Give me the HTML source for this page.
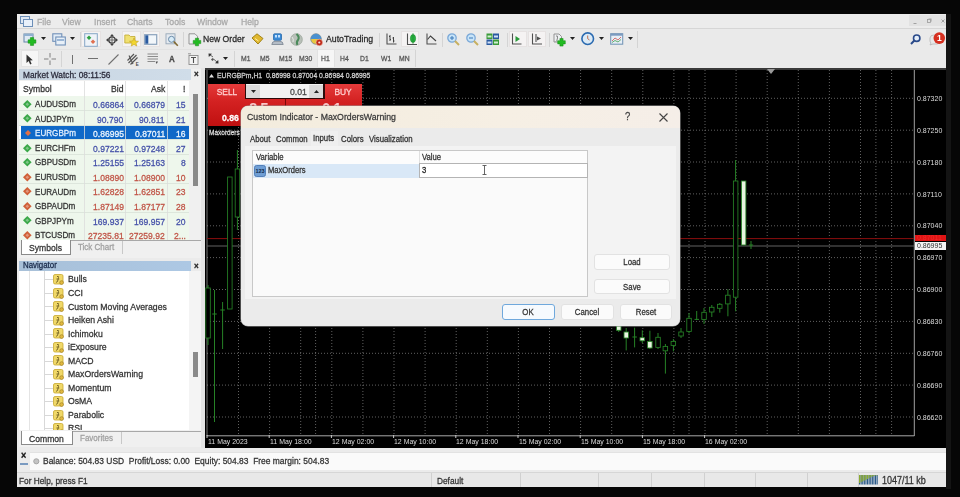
<!DOCTYPE html><html><head><meta charset="utf-8"><style>
html,body{margin:0;padding:0;}
body{width:960px;height:497px;overflow:hidden;background:#060606;position:relative;font-family:"Liberation Sans",sans-serif;}
div{box-sizing:border-box;}
#r div{-webkit-text-stroke:0.25px currentColor;}
#r{filter:blur(0.25px);}
.t{transform:scaleY(1.12);will-change:transform;}
svg{position:absolute;overflow:visible;}
</style></head><body><div id="r" style="position:absolute;left:0;top:0;width:960px;height:497px;overflow:hidden;"><div style="position:absolute;left:946px;top:14px;width:4.5px;height:475px;background:#141414;"></div><div style="position:absolute;left:17px;top:14px;width:929px;height:473px;background:#ebebeb;"></div><div style="position:absolute;left:17px;top:14px;width:929px;height:15px;background:#ececec;"></div><div class="t" style="position:absolute;left:37.2px;top:16.8px;font-size:8.7px;line-height:10.44px;color:#a8a8a8;white-space:nowrap;">File</div><div class="t" style="position:absolute;left:62.4px;top:16.8px;font-size:8.7px;line-height:10.44px;color:#a8a8a8;white-space:nowrap;">View</div><div class="t" style="position:absolute;left:93.5px;top:16.8px;font-size:8.7px;line-height:10.44px;color:#a8a8a8;white-space:nowrap;">Insert</div><div class="t" style="position:absolute;left:127.4px;top:16.8px;font-size:8.7px;line-height:10.44px;color:#a8a8a8;white-space:nowrap;">Charts</div><div class="t" style="position:absolute;left:164.8px;top:16.8px;font-size:8.7px;line-height:10.44px;color:#a8a8a8;white-space:nowrap;">Tools</div><div class="t" style="position:absolute;left:196.5px;top:16.8px;font-size:8.7px;line-height:10.44px;color:#a8a8a8;white-space:nowrap;">Window</div><div class="t" style="position:absolute;left:241.2px;top:16.8px;font-size:8.7px;line-height:10.44px;color:#a8a8a8;white-space:nowrap;">Help</div><svg style="left:20px;top:16px" width="13" height="12"><rect x="0.5" y="0.5" width="9" height="7" fill="#dfe9f5" stroke="#6d8fb8" stroke-width="1"/><rect x="3.5" y="3.5" width="9" height="7" fill="#e8f0fa" stroke="#6d8fb8" stroke-width="1"/></svg><div style="position:absolute;left:909px;top:14.7px;width:37px;height:11.1px;background:#e2e2e2;"></div><svg style="left:912px;top:18px" width="34" height="7"><path d="M1.5 5.5 H4.5" stroke="#9a9a9a" stroke-width="0.9"/><rect x="15.5" y="1.5" width="3" height="3" fill="none" stroke="#9a9a9a" stroke-width="0.8"/><path d="M16.5 0.8 H19.3 V3.6" fill="none" stroke="#9a9a9a" stroke-width="0.6"/><path d="M29.5 1.5 L32.5 4.5 M32.5 1.5 L29.5 4.5" stroke="#9a9a9a" stroke-width="0.9"/></svg><div style="position:absolute;left:17px;top:29px;width:929px;height:19px;background:#eaeaea;"></div><div style="position:absolute;left:17px;top:28.2px;width:929px;height:1px;background:#d6d6d6;"></div><div style="position:absolute;left:17px;top:48px;width:929px;height:20px;background:#eaeaea;"></div><div style="position:absolute;left:17px;top:48.5px;width:399px;height:1px;background:#e2e2e2;"></div><div style="position:absolute;left:81px;top:31px;width:20px;height:16px;background:#f5f3f3;border:1px solid #e6e2e2;"></div><div style="position:absolute;left:122px;top:31px;width:19px;height:16px;background:#f5f3f3;border:1px solid #e6e2e2;"></div><div style="position:absolute;left:142.5px;top:31px;width:17.5px;height:16px;background:#f5f3f3;border:1px solid #e6e2e2;"></div><div style="position:absolute;left:401.2px;top:31px;width:17.80000000000001px;height:16px;background:#f5f3f3;border:1px solid #e6e2e2;"></div><div style="position:absolute;left:508.5px;top:31px;width:18.0px;height:16px;background:#f5f3f3;border:1px solid #e6e2e2;"></div><div style="position:absolute;left:527.5px;top:31px;width:18.5px;height:16px;background:#f5f3f3;border:1px solid #e6e2e2;"></div><svg style="left:22.5px;top:32.5px" width="16" height="14" viewBox="0 0 16 14"><rect x="1" y="1" width="9" height="8" fill="#dfeaf5" stroke="#6f8fb0" stroke-width="1.1"/><rect x="1" y="1" width="9" height="2" fill="#8fb0d0"/><path d="M7.362 4.6 h3.276 v2.262 h2.262 v3.276 h-2.262 v2.262 h-3.276 v-2.262 h-2.262 v-3.276 h2.262 Z" fill="#22bb22" stroke="#118811" stroke-width="0.5"/></svg><svg style="left:41.0px;top:37.3px" width="5" height="3" viewBox="0 0 5 3"><path d="M0 0 L5 0 L2.5 3 Z" fill="#222"/></svg><svg style="left:52px;top:32.5px" width="14" height="13" viewBox="0 0 14 13"><rect x="0.8" y="0.8" width="9" height="7.5" fill="#e2ecf6" stroke="#7090b8" stroke-width="1.1"/><rect x="3.8" y="4" width="9.5" height="8" fill="#e8f0f8" stroke="#7090b8" stroke-width="1.1"/><rect x="5" y="6" width="7" height="2" fill="#9ab6d6"/></svg><svg style="left:70.3px;top:37.3px" width="5" height="3" viewBox="0 0 5 3"><path d="M0 0 L5 0 L2.5 3 Z" fill="#222"/></svg><div style="position:absolute;left:79.5px;top:32px;width:1px;height:15px;background:#d4d4d4;"></div><svg style="left:83.5px;top:32.5px" width="14" height="14" viewBox="0 0 14 14"><rect x="0.7" y="0.7" width="12.6" height="12.6" fill="#eef3f8" stroke="#86a6c6" stroke-width="1"/><path d="M5 2.5 L7.3 4.8 L5 7.1 L2.7 4.8Z" fill="#2fa040"/><path d="M9 6.5 L11.3 8.8 L9 11.1 L6.7 8.8Z" fill="#e07050"/></svg><svg style="left:105.5px;top:33.5px" width="12" height="12" viewBox="0 0 12 12"><circle cx="6" cy="6" r="3.2" fill="none" stroke="#404040" stroke-width="1.3"/><path d="M6 0 L8 2.3 L4 2.3Z M6 12 L8 9.7 L4 9.7Z M0 6 L2.3 4 L2.3 8Z M12 6 L9.7 4 L9.7 8Z" fill="#404040"/><path d="M6 2.3 V9.7 M2.3 6 H9.7" stroke="#505050" stroke-width="0.8"/></svg><svg style="left:123.5px;top:32.5px" width="15" height="13" viewBox="0 0 15 13"><path d="M0.8 2 L5 2 L6.5 3.5 L11 3.5 L11 10 L0.8 10Z" fill="#f0e070" stroke="#c0a830" stroke-width="0.8"/><path d="M10 5 L11.3 8 L14.5 8.3 L12 10.3 L12.8 13 L10 11.5 L7.2 13 L8 10.3 L5.5 8.3 L8.7 8Z" fill="#f2d630" stroke="#c0a020" stroke-width="0.6"/></svg><svg style="left:144px;top:34px" width="13.5" height="11" viewBox="0 0 13.5 11"><rect x="0.7" y="0.7" width="12" height="9.6" fill="#f2f6fa" stroke="#8aa2bc" stroke-width="1.2"/><rect x="1.3" y="1.3" width="3" height="8.4" fill="#2a5aa0"/></svg><svg style="left:164.5px;top:32.5px" width="14" height="14" viewBox="0 0 14 14"><rect x="1" y="0.8" width="9" height="10" fill="#e4eaf0" stroke="#98a8b8" stroke-width="0.9"/><circle cx="6.5" cy="6.3" r="3" fill="#d8ecf8" stroke="#6a8aa8" stroke-width="1"/><path d="M8.8 8.6 L12.8 12.8" stroke="#806830" stroke-width="1.6"/></svg><div style="position:absolute;left:183px;top:32px;width:1px;height:15px;background:#d4d4d4;"></div><svg style="left:187.5px;top:32.5px" width="14" height="14" viewBox="0 0 14 14"><path d="M1 0.8 H7 L9.5 3.3 V11 H1Z" fill="#eef0f2" stroke="#8a8a8a" stroke-width="0.9"/><path d="M7.404 5.2 h3.1919999999999997 v2.2039999999999997 h2.2039999999999997 v3.1919999999999997 h-2.2039999999999997 v2.2039999999999997 h-3.1919999999999997 v-2.2039999999999997 h-2.2039999999999997 v-3.1919999999999997 h2.2039999999999997 Z" fill="#22bb22" stroke="#118811" stroke-width="0.5"/></svg><div class="t" style="position:absolute;left:203.3px;top:34.0px;font-size:8.6px;line-height:10.32px;color:#2a2a2a;white-space:nowrap;">New Order</div><svg style="left:251px;top:33px" width="13" height="12" viewBox="0 0 13 12"><path d="M1 5 L6 0.8 L12 5.5 L7 11 Z" fill="#e0b830" stroke="#9a7a10" stroke-width="0.9"/><path d="M4 5.5 L7.5 8" stroke="#fff0a0" stroke-width="1"/></svg><svg style="left:271px;top:32.5px" width="13" height="13" viewBox="0 0 13 13"><rect x="2.5" y="0.8" width="8" height="6.5" rx="1" fill="#3a8ad6" stroke="#2a6aaa" stroke-width="0.8"/><rect x="4" y="2" width="2" height="2.5" fill="#bfe0ff"/><rect x="7" y="2" width="2" height="2.5" fill="#bfe0ff"/><path d="M0.8 11.5 Q1 8.3 4 8.3 H9 Q12 8.3 12.2 11.5Z" fill="#b4bcc6" stroke="#7a8490" stroke-width="0.8"/></svg><svg style="left:290.3px;top:32.7px" width="13" height="13" viewBox="0 0 13 13"><circle cx="6.5" cy="6.5" r="5.8" fill="#b8c0b8" stroke="#9aa49a" stroke-width="0.8"/><path d="M6.5 1 Q10 4 8 7 Q6 9 7.5 12" fill="none" stroke="#4a8a5a" stroke-width="2"/><path d="M2 4 Q4 6 3 9" stroke="#e8ece8" stroke-width="1" fill="none"/></svg><svg style="left:310px;top:32.5px" width="13.5" height="13.5" viewBox="0 0 13.5 13.5"><circle cx="6" cy="6" r="5.3" fill="#e8c840" stroke="#7a8a9a" stroke-width="0.8"/><path d="M0.7 6 A5.3 5.3 0 0 1 11.3 6 Z" fill="#4a90d0"/><circle cx="9.3" cy="9.5" r="3.3" fill="#c02818" stroke="#f0d0c0" stroke-width="0.5"/><circle cx="9.3" cy="9.5" r="1.1" fill="#f4e0d8"/></svg><div class="t" style="position:absolute;left:326.3px;top:34.0px;font-size:8.72px;line-height:10.46px;color:#2a2a2a;white-space:nowrap;">AutoTrading</div><div style="position:absolute;left:379.2px;top:32.5px;width:1px;height:14.5px;background:#d4d4d4;"></div><svg style="left:386px;top:33px" width="11" height="12" viewBox="0 0 11 12"><path d="M1 0.5 V11 H10.5" fill="none" stroke="#505050" stroke-width="1.1"/><path d="M4 2 V8 M3 3.5 H4 M4 6.5 H5 M7.5 4 V9.5 M6.5 5 H7.5 M7.5 8 H8.5" stroke="#404040" stroke-width="1"/></svg><svg style="left:405.5px;top:32.5px" width="12" height="13" viewBox="0 0 12 13"><path d="M1.5 0.5 V11.5 H11" fill="none" stroke="#505050" stroke-width="1.1"/><ellipse cx="7" cy="5.5" rx="2.6" ry="4" fill="#28b040" stroke="#188a2a" stroke-width="0.6"/><path d="M7 0 V11" stroke="#188a2a" stroke-width="0.6"/></svg><svg style="left:426px;top:33px" width="11" height="12" viewBox="0 0 11 12"><path d="M1 0.5 V11 H10.5" fill="none" stroke="#505050" stroke-width="1.1"/><path d="M1.5 6.5 L4.5 3 L10 8" fill="none" stroke="#404040" stroke-width="1.1"/></svg><div style="position:absolute;left:442px;top:32.5px;width:1px;height:14.5px;background:#d4d4d4;"></div><svg style="left:447.2px;top:32.5px" width="13" height="13" viewBox="0 0 13 13"><circle cx="5" cy="5" r="4.2" fill="#c8e4f8" stroke="#7aa8d8" stroke-width="1.3"/><path d="M3 5 H7 M5 3 V7" stroke="#3a78b8" stroke-width="1"/><path d="M8 8 L12 12" stroke="#c8b060" stroke-width="2"/></svg><svg style="left:466px;top:32.5px" width="13" height="13" viewBox="0 0 13 13"><circle cx="5" cy="5" r="4.2" fill="#c8e4f8" stroke="#7aa8d8" stroke-width="1.3"/><path d="M3 5 H7" stroke="#3a78b8" stroke-width="1"/><path d="M8 8 L12 12" stroke="#c8b060" stroke-width="2"/></svg><svg style="left:486px;top:33px" width="13.5" height="12.5" viewBox="0 0 13.5 12.5"><rect x="0.5" y="0.5" width="6" height="5.5" fill="#3a9a3a"/><rect x="7" y="0.5" width="6" height="5.5" fill="#2a5aa0"/><rect x="0.5" y="6.5" width="6" height="5.5" fill="#2a5aa0"/><rect x="7" y="6.5" width="6" height="5.5" fill="#3a9a3a"/><rect x="1.5" y="2.5" width="4" height="2" fill="#d0f0d0"/><rect x="8" y="2.5" width="4" height="2" fill="#d0e0f8"/><rect x="1.5" y="8.5" width="4" height="2" fill="#d0e0f8"/><rect x="8" y="8.5" width="4" height="2" fill="#d0f0d0"/></svg><div style="position:absolute;left:506.7px;top:32.5px;width:1px;height:14.5px;background:#d4d4d4;"></div><svg style="left:511px;top:33px" width="11" height="12" viewBox="0 0 11 12"><path d="M1.5 0.5 V11 H10.5" fill="none" stroke="#505050" stroke-width="1.1"/><path d="M4.5 3 L9 6 L4.5 9Z" fill="#2a9a3a"/></svg><svg style="left:530.5px;top:33px" width="12" height="12" viewBox="0 0 12 12"><path d="M1.5 0.5 V11 H11" fill="none" stroke="#505050" stroke-width="1.1"/><path d="M5 1 V9" stroke="#505050" stroke-width="1.1"/><path d="M6 3.5 L10 5.5 L6 7.5Z" fill="#505050"/></svg><div style="position:absolute;left:549.4px;top:32.5px;width:1px;height:14.5px;background:#d4d4d4;"></div><svg style="left:553px;top:32.5px" width="13.5" height="14" viewBox="0 0 13.5 14"><path d="M1 1 H6 L8.5 3.5 V9 H1Z" fill="#eef0f2" stroke="#8a8a8a" stroke-width="0.9"/><path d="M3 3 Q5 2 4.5 5 Q4 8 3 8.5" fill="none" stroke="#6a6a6a" stroke-width="0.8"/><path d="M6.904 5.500000000000001 h3.1919999999999997 v2.2039999999999997 h2.2039999999999997 v3.1919999999999997 h-2.2039999999999997 v2.2039999999999997 h-3.1919999999999997 v-2.2039999999999997 h-2.2039999999999997 v-3.1919999999999997 h2.2039999999999997 Z" fill="#22bb22" stroke="#118811" stroke-width="0.5"/></svg><svg style="left:569.5px;top:37.3px" width="5" height="3" viewBox="0 0 5 3"><path d="M0 0 L5 0 L2.5 3 Z" fill="#222"/></svg><svg style="left:581px;top:32.3px" width="13.5" height="13.5" viewBox="0 0 13.5 13.5"><circle cx="6.7" cy="6.7" r="5.8" fill="#dbeaf6" stroke="#2a6ab0" stroke-width="1.6"/><path d="M6.7 6.7 L6.7 3.5 M6.7 6.7 L8.5 8" stroke="#c07050" stroke-width="1"/></svg><svg style="left:598.8px;top:37.3px" width="5" height="3" viewBox="0 0 5 3"><path d="M0 0 L5 0 L2.5 3 Z" fill="#222"/></svg><svg style="left:610px;top:33px" width="13.5" height="12" viewBox="0 0 13.5 12"><rect x="0.7" y="0.7" width="12" height="10.5" fill="#e6eef6" stroke="#7898b8" stroke-width="1.1"/><rect x="0.7" y="0.7" width="12" height="2" fill="#7a9ac0"/><path d="M2 8 L5 5 L8 7 L11 4" fill="none" stroke="#d05050" stroke-width="0.8"/><path d="M2 9.5 L5 7.5 L8 9 L11 6.5" fill="none" stroke="#40a050" stroke-width="0.8"/></svg><svg style="left:627.9px;top:37.3px" width="5" height="3" viewBox="0 0 5 3"><path d="M0 0 L5 0 L2.5 3 Z" fill="#222"/></svg><div style="position:absolute;left:636.7px;top:31px;width:1px;height:16.5px;background:#d4d4d4;"></div><svg style="left:910px;top:33.5px" width="11" height="11" viewBox="0 0 11 11"><circle cx="6.7" cy="4.2" r="3.2" fill="#e4eefa" stroke="#2a4a8a" stroke-width="1.6"/><path d="M4.6 6.3 L1 10" stroke="#2a4a8a" stroke-width="2"/></svg><svg style="left:928px;top:31.5px" width="18" height="14" viewBox="0 0 18 14"><path d="M2 6 Q2 3 6 3 H9 Q12 3 12 6 V9 Q12 12 9 12 H5 L2 13 L3 11 Q2 10 2 9Z" fill="#e8e8e8" stroke="#b0b0b0" stroke-width="0.7"/><circle cx="11.3" cy="6.1" r="5.8" fill="#d63020"/><text x="11.3" y="9.0" font-size="8.5" font-weight="bold" text-anchor="middle" fill="#fff" font-family="Liberation Sans">1</text></svg><div style="position:absolute;left:21.2px;top:50.3px;width:18.3px;height:16.4px;background:#f6f6f6;border:1px solid #e4e4e4;"></div><svg style="left:26px;top:53.5px" width="7" height="11" viewBox="0 0 7 11"><path d="M0.5 0.5 L0.5 9 L2.6 7 L4.2 10.5 L5.6 9.8 L4.1 6.5 L6.8 6.3Z" fill="#303030"/></svg><svg style="left:44px;top:53px" width="12" height="12" viewBox="0 0 12 12"><path d="M6 0 V4.5 M6 7.5 V12 M0 6 H4.5 M7.5 6 H12" stroke="#808080" stroke-width="1"/></svg><div style="position:absolute;left:61px;top:50.5px;width:1px;height:16.0px;background:#d4d4d4;"></div><div style="position:absolute;left:72.3px;top:54.5px;width:1.2px;height:9.4px;background:#707070;"></div><div style="position:absolute;left:88.2px;top:58.1px;width:9.4px;height:1.2px;background:#707070;"></div><svg style="left:107.7px;top:53.5px" width="11" height="11" viewBox="0 0 11 11"><path d="M0.5 10.5 L10.5 0.5" stroke="#707070" stroke-width="1.1"/></svg><svg style="left:126.5px;top:52.5px" width="12" height="13" viewBox="0 0 12 13"><path d="M0.5 7.5 L7 1 M1.5 10 L9.5 2 M3.5 11.5 L10.5 4.5" stroke="#555" stroke-width="1.2"/><path d="M2 2.5 L6 11" stroke="#555" stroke-width="1.1"/><text x="8.8" y="12.8" font-size="4.5" font-weight="bold" fill="#444" font-family="Liberation Sans">E</text></svg><svg style="left:147.3px;top:53px" width="12" height="12" viewBox="0 0 12 12"><path d="M0.5 1 H11 M0.5 3.5 H11 M0.5 6 H11 M0.5 8.5 H8" stroke="#808080" stroke-width="0.9"/><path d="M8.5 8.5 L11 8.5 L9.7 11Z" fill="#505050"/></svg><div class="t" style="position:absolute;left:169.4px;top:54.9px;font-size:8px;line-height:9.60px;color:#4a4a4a;white-space:nowrap;font-weight:bold;">A</div><svg style="left:188px;top:52.5px" width="11" height="12" viewBox="0 0 11 12"><rect x="1" y="2.5" width="9" height="9" fill="#f4f4f4" stroke="#8a8a8a" stroke-width="0.9"/><path d="M3 4.5 H8 M5.5 4.5 V10" stroke="#505050" stroke-width="1.1"/><path d="M0 0.8 H3" stroke="#808080" stroke-width="0.8"/></svg><svg style="left:207.5px;top:53px" width="11" height="11" viewBox="0 0 11 11"><path d="M1.5 1.5 L5 4" stroke="#666" stroke-width="1"/><path d="M0.5 0.5 L4 0.8 L0.8 4Z" fill="#333"/><path d="M5.5 6 L9 9" stroke="#666" stroke-width="1"/><path d="M10.5 10.5 L7 10.2 L10.2 7Z" fill="#333"/><path d="M3 6.5 L4.5 5 L6 6.5 L4.5 8Z" fill="#555"/></svg><svg style="left:223.2px;top:57.3px" width="5" height="3" viewBox="0 0 5 3"><path d="M0 0 L5 0 L2.5 3 Z" fill="#222"/></svg><div style="position:absolute;left:234.4px;top:50.5px;width:1px;height:16.0px;background:#d4d4d4;"></div><div style="position:absolute;left:316.9px;top:50px;width:18.3px;height:17px;background:#f6f6f6;border-left:1px solid #e2e2e2;border-right:1px solid #e2e2e2;"></div><div class="t" style="position:absolute;left:240.8px;top:54.5px;font-size:6.8px;line-height:8.16px;color:#555;white-space:nowrap;">M1</div><div class="t" style="position:absolute;left:260px;top:54.5px;font-size:6.8px;line-height:8.16px;color:#555;white-space:nowrap;">M5</div><div class="t" style="position:absolute;left:279px;top:54.5px;font-size:6.8px;line-height:8.16px;color:#555;white-space:nowrap;">M15</div><div class="t" style="position:absolute;left:298.5px;top:54.5px;font-size:6.8px;line-height:8.16px;color:#555;white-space:nowrap;">M30</div><div class="t" style="position:absolute;left:321px;top:54.5px;font-size:6.8px;line-height:8.16px;color:#555;white-space:nowrap;">H1</div><div class="t" style="position:absolute;left:340.2px;top:54.5px;font-size:6.8px;line-height:8.16px;color:#555;white-space:nowrap;">H4</div><div class="t" style="position:absolute;left:360.4px;top:54.5px;font-size:6.8px;line-height:8.16px;color:#555;white-space:nowrap;">D1</div><div class="t" style="position:absolute;left:380.6px;top:54.5px;font-size:6.8px;line-height:8.16px;color:#555;white-space:nowrap;">W1</div><div class="t" style="position:absolute;left:399px;top:54.5px;font-size:6.8px;line-height:8.16px;color:#555;white-space:nowrap;">MN</div><div style="position:absolute;left:415.4px;top:50px;width:1px;height:17px;background:#d4d4d4;"></div><div style="position:absolute;left:201px;top:68px;width:4px;height:380px;background:#e4e4e4;"></div><div style="position:absolute;left:205px;top:68px;width:741px;height:380px;background:#000;"></div><div style="position:absolute;left:205px;top:68px;width:741px;height:2px;background:#3a3a3a;"></div><svg style="left:0;top:0" width="960" height="497"><line x1="238.5" y1="70" x2="238.5" y2="436" stroke="#8a8a8a" stroke-width="1" stroke-dasharray="1 2" opacity="0.7"/><line x1="269.6" y1="70" x2="269.6" y2="436" stroke="#8a8a8a" stroke-width="1" stroke-dasharray="1 2" opacity="0.7"/><line x1="300.7" y1="70" x2="300.7" y2="436" stroke="#8a8a8a" stroke-width="1" stroke-dasharray="1 2" opacity="0.7"/><line x1="331.8" y1="70" x2="331.8" y2="436" stroke="#8a8a8a" stroke-width="1" stroke-dasharray="1 2" opacity="0.7"/><line x1="362.9" y1="70" x2="362.9" y2="436" stroke="#8a8a8a" stroke-width="1" stroke-dasharray="1 2" opacity="0.7"/><line x1="394.0" y1="70" x2="394.0" y2="436" stroke="#8a8a8a" stroke-width="1" stroke-dasharray="1 2" opacity="0.7"/><line x1="425.1" y1="70" x2="425.1" y2="436" stroke="#8a8a8a" stroke-width="1" stroke-dasharray="1 2" opacity="0.7"/><line x1="456.2" y1="70" x2="456.2" y2="436" stroke="#8a8a8a" stroke-width="1" stroke-dasharray="1 2" opacity="0.7"/><line x1="487.3" y1="70" x2="487.3" y2="436" stroke="#8a8a8a" stroke-width="1" stroke-dasharray="1 2" opacity="0.7"/><line x1="518.4" y1="70" x2="518.4" y2="436" stroke="#8a8a8a" stroke-width="1" stroke-dasharray="1 2" opacity="0.7"/><line x1="549.5" y1="70" x2="549.5" y2="436" stroke="#8a8a8a" stroke-width="1" stroke-dasharray="1 2" opacity="0.7"/><line x1="580.6" y1="70" x2="580.6" y2="436" stroke="#8a8a8a" stroke-width="1" stroke-dasharray="1 2" opacity="0.7"/><line x1="611.7" y1="70" x2="611.7" y2="436" stroke="#8a8a8a" stroke-width="1" stroke-dasharray="1 2" opacity="0.7"/><line x1="642.8" y1="70" x2="642.8" y2="436" stroke="#8a8a8a" stroke-width="1" stroke-dasharray="1 2" opacity="0.7"/><line x1="673.9" y1="70" x2="673.9" y2="436" stroke="#8a8a8a" stroke-width="1" stroke-dasharray="1 2" opacity="0.7"/><line x1="705.0" y1="70" x2="705.0" y2="436" stroke="#8a8a8a" stroke-width="1" stroke-dasharray="1 2" opacity="0.7"/><line x1="736.1" y1="70" x2="736.1" y2="436" stroke="#8a8a8a" stroke-width="1" stroke-dasharray="1 2" opacity="0.7"/><line x1="767.2" y1="70" x2="767.2" y2="436" stroke="#8a8a8a" stroke-width="1" stroke-dasharray="1 2" opacity="0.7"/><line x1="798.3" y1="70" x2="798.3" y2="436" stroke="#8a8a8a" stroke-width="1" stroke-dasharray="1 2" opacity="0.7"/><line x1="829.4" y1="70" x2="829.4" y2="436" stroke="#8a8a8a" stroke-width="1" stroke-dasharray="1 2" opacity="0.7"/><line x1="860.5" y1="70" x2="860.5" y2="436" stroke="#8a8a8a" stroke-width="1" stroke-dasharray="1 2" opacity="0.7"/><line x1="891.6" y1="70" x2="891.6" y2="436" stroke="#8a8a8a" stroke-width="1" stroke-dasharray="1 2" opacity="0.7"/><line x1="315.6" y1="70" x2="315.6" y2="436" stroke="#8a8a8a" stroke-width="1" stroke-dasharray="1 2" opacity="0.7"/><line x1="689.0" y1="70" x2="689.0" y2="436" stroke="#8a8a8a" stroke-width="1" stroke-dasharray="1 2" opacity="0.7"/><line x1="875.9" y1="70" x2="875.9" y2="436" stroke="#8a8a8a" stroke-width="1" stroke-dasharray="1 2" opacity="0.7"/><line x1="207" y1="98.3" x2="914" y2="98.3" stroke="#8a8a8a" stroke-width="1" stroke-dasharray="1 2" opacity="0.7"/><line x1="207" y1="130.2" x2="914" y2="130.2" stroke="#8a8a8a" stroke-width="1" stroke-dasharray="1 2" opacity="0.7"/><line x1="207" y1="162.0" x2="914" y2="162.0" stroke="#8a8a8a" stroke-width="1" stroke-dasharray="1 2" opacity="0.7"/><line x1="207" y1="193.9" x2="914" y2="193.9" stroke="#8a8a8a" stroke-width="1" stroke-dasharray="1 2" opacity="0.7"/><line x1="207" y1="225.8" x2="914" y2="225.8" stroke="#8a8a8a" stroke-width="1" stroke-dasharray="1 2" opacity="0.7"/><line x1="207" y1="257.6" x2="914" y2="257.6" stroke="#8a8a8a" stroke-width="1" stroke-dasharray="1 2" opacity="0.7"/><line x1="207" y1="289.5" x2="914" y2="289.5" stroke="#8a8a8a" stroke-width="1" stroke-dasharray="1 2" opacity="0.7"/><line x1="207" y1="321.4" x2="914" y2="321.4" stroke="#8a8a8a" stroke-width="1" stroke-dasharray="1 2" opacity="0.7"/><line x1="207" y1="353.3" x2="914" y2="353.3" stroke="#8a8a8a" stroke-width="1" stroke-dasharray="1 2" opacity="0.7"/><line x1="207" y1="385.1" x2="914" y2="385.1" stroke="#8a8a8a" stroke-width="1" stroke-dasharray="1 2" opacity="0.7"/><line x1="207" y1="417.0" x2="914" y2="417.0" stroke="#8a8a8a" stroke-width="1" stroke-dasharray="1 2" opacity="0.7"/><line x1="914.3" y1="70" x2="914.3" y2="436" stroke="#b4b4b4" stroke-width="0.9"/><line x1="207" y1="435.8" x2="914.3" y2="435.8" stroke="#a8a8a8" stroke-width="1"/><line x1="207" y1="70" x2="207" y2="436" stroke="#c8c8c8" stroke-width="0.6"/><line x1="207" y1="238.6" x2="914" y2="238.6" stroke="#8a0e0e" stroke-width="1"/><line x1="207" y1="246" x2="914" y2="246" stroke="#626262" stroke-width="1"/><line x1="207.0" y1="435" x2="207.0" y2="438" stroke="#c8c8c8" stroke-width="1"/><line x1="269.2" y1="435" x2="269.2" y2="438" stroke="#c8c8c8" stroke-width="1"/><line x1="331.4" y1="435" x2="331.4" y2="438" stroke="#c8c8c8" stroke-width="1"/><line x1="393.6" y1="435" x2="393.6" y2="438" stroke="#c8c8c8" stroke-width="1"/><line x1="455.8" y1="435" x2="455.8" y2="438" stroke="#c8c8c8" stroke-width="1"/><line x1="518.0" y1="435" x2="518.0" y2="438" stroke="#c8c8c8" stroke-width="1"/><line x1="580.2" y1="435" x2="580.2" y2="438" stroke="#c8c8c8" stroke-width="1"/><line x1="642.4" y1="435" x2="642.4" y2="438" stroke="#c8c8c8" stroke-width="1"/><line x1="704.6" y1="435" x2="704.6" y2="438" stroke="#c8c8c8" stroke-width="1"/><line x1="208.0" y1="285.0" x2="208.0" y2="345.0" stroke="#268226" stroke-width="1"/><rect x="205.8" y="288.0" width="4.5" height="50.0" fill="#000" stroke="#268226" stroke-width="0.85"/><line x1="214.5" y1="290.0" x2="214.5" y2="422.0" stroke="#268226" stroke-width="1"/><line x1="212.2" y1="314.0" x2="216.8" y2="314.0" stroke="#268226" stroke-width="1"/><line x1="222.6" y1="302.0" x2="222.6" y2="349.0" stroke="#268226" stroke-width="1"/><line x1="220.3" y1="310.0" x2="224.8" y2="310.0" stroke="#268226" stroke-width="1"/><line x1="229.8" y1="177.0" x2="229.8" y2="309.0" stroke="#268226" stroke-width="1"/><rect x="227.6" y="177.0" width="4.5" height="132.0" fill="#000" stroke="#268226" stroke-width="0.85"/><line x1="237.4" y1="150.0" x2="237.4" y2="230.0" stroke="#268226" stroke-width="1"/><rect x="235.2" y="169.0" width="4.5" height="48.0" fill="#000" stroke="#268226" stroke-width="0.85"/><line x1="618.7" y1="322.0" x2="618.7" y2="332.0" stroke="#268226" stroke-width="1"/><rect x="616.5" y="326.0" width="4.5" height="4.3" fill="#e8f5e0" stroke="#268226" stroke-width="0.85"/><line x1="626.2" y1="328.0" x2="626.2" y2="350.4" stroke="#268226" stroke-width="1"/><rect x="624.0" y="332.0" width="4.5" height="6.0" fill="#e8f5e0" stroke="#268226" stroke-width="0.85"/><line x1="634.6" y1="327.7" x2="634.6" y2="347.4" stroke="#268226" stroke-width="1"/><line x1="632.4" y1="337.0" x2="636.9" y2="337.0" stroke="#268226" stroke-width="1"/><line x1="642.3" y1="330.3" x2="642.3" y2="343.0" stroke="#268226" stroke-width="1"/><rect x="640.0" y="337.7" width="4.5" height="3.1" fill="#e8f5e0" stroke="#268226" stroke-width="0.85"/><line x1="649.9" y1="330.7" x2="649.9" y2="349.0" stroke="#268226" stroke-width="1"/><rect x="647.6" y="341.4" width="4.5" height="6.6" fill="#e8f5e0" stroke="#268226" stroke-width="0.85"/><line x1="658.0" y1="333.0" x2="658.0" y2="349.0" stroke="#268226" stroke-width="1"/><rect x="655.8" y="337.3" width="4.5" height="10.1" fill="#000" stroke="#268226" stroke-width="0.85"/><line x1="665.4" y1="344.0" x2="665.4" y2="373.6" stroke="#268226" stroke-width="1"/><rect x="663.1" y="346.4" width="4.5" height="4.4" fill="#000" stroke="#268226" stroke-width="0.85"/><line x1="673.4" y1="339.0" x2="673.4" y2="351.4" stroke="#268226" stroke-width="1"/><rect x="671.1" y="341.4" width="4.5" height="4.0" fill="#000" stroke="#268226" stroke-width="0.85"/><line x1="681.0" y1="328.0" x2="681.0" y2="338.0" stroke="#268226" stroke-width="1"/><rect x="678.8" y="332.0" width="4.5" height="4.0" fill="#000" stroke="#268226" stroke-width="0.85"/><line x1="689.0" y1="313.0" x2="689.0" y2="333.4" stroke="#268226" stroke-width="1"/><rect x="686.8" y="318.3" width="4.5" height="13.1" fill="#000" stroke="#268226" stroke-width="0.85"/><line x1="696.7" y1="311.0" x2="696.7" y2="320.0" stroke="#268226" stroke-width="1"/><line x1="694.5" y1="319.4" x2="699.0" y2="319.4" stroke="#268226" stroke-width="1"/><line x1="704.0" y1="308.0" x2="704.0" y2="324.0" stroke="#268226" stroke-width="1"/><rect x="701.8" y="312.3" width="4.5" height="7.1" fill="#000" stroke="#268226" stroke-width="0.85"/><line x1="711.8" y1="305.0" x2="711.8" y2="317.0" stroke="#268226" stroke-width="1"/><rect x="709.5" y="307.3" width="4.5" height="4.7" fill="#000" stroke="#268226" stroke-width="0.85"/><line x1="719.8" y1="303.0" x2="719.8" y2="312.7" stroke="#268226" stroke-width="1"/><rect x="717.5" y="304.3" width="4.5" height="4.0" fill="#000" stroke="#268226" stroke-width="0.85"/><line x1="727.9" y1="289.2" x2="727.9" y2="316.3" stroke="#268226" stroke-width="1"/><rect x="725.6" y="295.2" width="4.5" height="8.7" fill="#000" stroke="#268226" stroke-width="0.85"/><line x1="735.6" y1="160.0" x2="735.6" y2="311.3" stroke="#268226" stroke-width="1"/><rect x="733.4" y="181.0" width="4.5" height="116.2" fill="#000" stroke="#268226" stroke-width="0.85"/><line x1="743.6" y1="181.0" x2="743.6" y2="245.0" stroke="#268226" stroke-width="1"/><rect x="741.4" y="181.0" width="4.5" height="64.0" fill="#e8f5e0" stroke="#268226" stroke-width="0.85"/><line x1="751.0" y1="241.0" x2="751.0" y2="249.0" stroke="#268226" stroke-width="1"/><line x1="748.8" y1="245.0" x2="753.2" y2="245.0" stroke="#268226" stroke-width="1"/></svg><div class="t" style="position:absolute;left:917.4px;top:94.89999999999999px;font-size:7.0px;line-height:8.40px;color:#dcdcdc;white-space:nowrap;-webkit-text-stroke:0;">0.87320</div><div class="t" style="position:absolute;left:917.4px;top:126.76999999999998px;font-size:7.0px;line-height:8.40px;color:#dcdcdc;white-space:nowrap;-webkit-text-stroke:0;">0.87250</div><div class="t" style="position:absolute;left:917.4px;top:158.64px;font-size:7.0px;line-height:8.40px;color:#dcdcdc;white-space:nowrap;-webkit-text-stroke:0;">0.87180</div><div class="t" style="position:absolute;left:917.4px;top:190.51px;font-size:7.0px;line-height:8.40px;color:#dcdcdc;white-space:nowrap;-webkit-text-stroke:0;">0.87110</div><div class="t" style="position:absolute;left:917.4px;top:222.38px;font-size:7.0px;line-height:8.40px;color:#dcdcdc;white-space:nowrap;-webkit-text-stroke:0;">0.87040</div><div class="t" style="position:absolute;left:917.4px;top:254.24999999999997px;font-size:7.0px;line-height:8.40px;color:#dcdcdc;white-space:nowrap;-webkit-text-stroke:0;">0.86970</div><div class="t" style="position:absolute;left:917.4px;top:286.12px;font-size:7.0px;line-height:8.40px;color:#dcdcdc;white-space:nowrap;-webkit-text-stroke:0;">0.86900</div><div class="t" style="position:absolute;left:917.4px;top:317.99px;font-size:7.0px;line-height:8.40px;color:#dcdcdc;white-space:nowrap;-webkit-text-stroke:0;">0.86830</div><div class="t" style="position:absolute;left:917.4px;top:349.86px;font-size:7.0px;line-height:8.40px;color:#dcdcdc;white-space:nowrap;-webkit-text-stroke:0;">0.86760</div><div class="t" style="position:absolute;left:917.4px;top:381.73px;font-size:7.0px;line-height:8.40px;color:#dcdcdc;white-space:nowrap;-webkit-text-stroke:0;">0.86690</div><div class="t" style="position:absolute;left:917.4px;top:413.6px;font-size:7.0px;line-height:8.40px;color:#dcdcdc;white-space:nowrap;-webkit-text-stroke:0;">0.86620</div><div style="position:absolute;left:915px;top:234.6px;width:30.5px;height:6.8px;background:#e01414;"></div><div class="t" style="position:absolute;left:917.4px;top:234.4px;font-size:7.0px;line-height:8.40px;color:#f02a2a;white-space:nowrap;-webkit-text-stroke:0;">0.87011</div><div style="position:absolute;left:915px;top:241.5px;width:30.5px;height:8.7px;background:#f4f4f4;"></div><div class="t" style="position:absolute;left:917.4px;top:242.2px;font-size:7.0px;line-height:8.40px;color:#333;white-space:nowrap;-webkit-text-stroke:0;">0.86995</div><div class="t" style="position:absolute;left:207.5px;top:438.3px;font-size:6.96px;line-height:8.35px;color:#dcdcdc;white-space:nowrap;-webkit-text-stroke:0;">11 May 2023</div><div class="t" style="position:absolute;left:269.7px;top:438.3px;font-size:6.96px;line-height:8.35px;color:#dcdcdc;white-space:nowrap;-webkit-text-stroke:0;">11 May 18:00</div><div class="t" style="position:absolute;left:331.9px;top:438.3px;font-size:6.96px;line-height:8.35px;color:#dcdcdc;white-space:nowrap;-webkit-text-stroke:0;">12 May 02:00</div><div class="t" style="position:absolute;left:394.1px;top:438.3px;font-size:6.96px;line-height:8.35px;color:#dcdcdc;white-space:nowrap;-webkit-text-stroke:0;">12 May 10:00</div><div class="t" style="position:absolute;left:456.3px;top:438.3px;font-size:6.96px;line-height:8.35px;color:#dcdcdc;white-space:nowrap;-webkit-text-stroke:0;">12 May 18:00</div><div class="t" style="position:absolute;left:518.5px;top:438.3px;font-size:6.96px;line-height:8.35px;color:#dcdcdc;white-space:nowrap;-webkit-text-stroke:0;">15 May 02:00</div><div class="t" style="position:absolute;left:580.7px;top:438.3px;font-size:6.96px;line-height:8.35px;color:#dcdcdc;white-space:nowrap;-webkit-text-stroke:0;">15 May 10:00</div><div class="t" style="position:absolute;left:642.9000000000001px;top:438.3px;font-size:6.96px;line-height:8.35px;color:#dcdcdc;white-space:nowrap;-webkit-text-stroke:0;">15 May 18:00</div><div class="t" style="position:absolute;left:705.1px;top:438.3px;font-size:6.96px;line-height:8.35px;color:#dcdcdc;white-space:nowrap;-webkit-text-stroke:0;">16 May 02:00</div><svg style="left:208.8px;top:73.5px" width="5" height="3.5"><path d="M0 3.5 L2.5 0 L5 3.5 Z" fill="#ddd"/></svg><div class="t" style="position:absolute;left:217px;top:72.3px;font-size:6.83px;line-height:8.20px;color:#cfcfcf;white-space:nowrap;">EURGBPm,H1&nbsp; 0.86998 0.87004 0.86984 0.86995</div><svg style="left:767px;top:69px" width="8" height="5"><path d="M0 0 L8 0 L4 5 Z" fill="#9a9a9a"/></svg><div style="position:absolute;left:208px;top:83.8px;width:153.7px;height:42.5px;background:linear-gradient(#e43a3a,#d42222 40%,#c01010);"></div><div style="position:absolute;left:285px;top:98.5px;width:1.2px;height:10px;background:#7a0808;"></div><div style="position:absolute;left:244.8px;top:83.8px;width:80px;height:15px;background:#2a0a0a;"></div><div class="t" style="position:absolute;left:126.5px;width:200px;top:87.2px;font-size:8.4px;line-height:10.08px;color:#ffd0d0;white-space:nowrap;text-align:center;">SELL</div><div class="t" style="position:absolute;left:243px;width:200px;top:87.2px;font-size:8.4px;line-height:10.08px;color:#ffd0d0;white-space:nowrap;text-align:center;">BUY</div><div style="position:absolute;left:245.8px;top:84px;width:77.5px;height:14.3px;background:#f2f2f2;"></div><div style="position:absolute;left:246.3px;top:84.5px;width:14px;height:13.3px;background:#dadada;"></div><div style="position:absolute;left:309px;top:84.5px;width:14px;height:13.3px;background:#dadada;"></div><svg style="left:251px;top:89.5px" width="5" height="3"><path d="M0 0 L5 0 L2.5 3 Z" fill="#222"/></svg><svg style="left:313.5px;top:89.5px" width="5" height="3"><path d="M0 3 L5 3 L2.5 0 Z" fill="#222"/></svg><div class="t" style="position:absolute;right:653.5px;top:86.5px;font-size:8.7px;line-height:10.44px;color:#444;white-space:nowrap;text-align:right;">0.01</div><div class="t" style="position:absolute;left:221.5px;top:112.5px;font-size:8.7px;line-height:10.44px;color:#fff;white-space:nowrap;font-weight:bold;">0.86</div><div class="t" style="position:absolute;left:249px;top:99.8px;font-size:15px;line-height:18.00px;color:#f8c8c8;white-space:nowrap;font-weight:bold;-webkit-text-stroke:0;">8&thinsp;5</div><div class="t" style="position:absolute;left:322px;top:99.8px;font-size:15px;line-height:18.00px;color:#f8c8c8;white-space:nowrap;font-weight:bold;-webkit-text-stroke:0;">0&thinsp;1</div><div class="t" style="position:absolute;left:208.5px;top:129px;font-size:6.5px;line-height:7.80px;color:#ddd;white-space:nowrap;">Maxorders</div><div style="position:absolute;left:18.5px;top:68.5px;width:182.5px;height:189px;background:#f0f0f0;"></div><div style="position:absolute;left:19px;top:69px;width:171.5px;height:11.2px;background:linear-gradient(90deg,#c8d5e2,#d0dde9);"></div><div class="t" style="position:absolute;left:22.5px;top:70.0px;font-size:8.33px;line-height:10.00px;color:#2a2a3a;white-space:nowrap;">Market Watch: 08:11:56</div><div class="t" style="position:absolute;left:194px;top:70.3px;font-size:8px;line-height:9.60px;color:#1a1a1a;white-space:nowrap;font-weight:bold;">&#215;</div><div style="position:absolute;left:19px;top:80.5px;width:170px;height:160px;background:#fff;"></div><div style="position:absolute;left:19px;top:80.5px;width:170px;height:15.5px;background:#fff;"></div><div class="t" style="position:absolute;left:23px;top:84.4px;font-size:8.6px;line-height:10.32px;color:#333;white-space:nowrap;">Symbol</div><div class="t" style="position:absolute;right:836.5px;top:84.4px;font-size:8.6px;line-height:10.32px;color:#333;white-space:nowrap;text-align:right;">Bid</div><div class="t" style="position:absolute;right:795px;top:84.4px;font-size:8.6px;line-height:10.32px;color:#333;white-space:nowrap;text-align:right;">Ask</div><div class="t" style="position:absolute;right:774.5px;top:84.4px;font-size:8.6px;line-height:10.32px;color:#333;white-space:nowrap;text-align:right;">!</div><div style="position:absolute;left:19px;top:96.3px;width:170px;height:14.55px;background:#eef7ec;"></div><div style="position:absolute;left:19px;top:110.35px;width:170px;height:0.6px;background:#dde6dc;"></div><svg style="left:23.2px;top:99.9px" width="8.6" height="8.6"><path d="M4.3 0 L8.6 4.3 L4.3 8.6 L0 4.3 Z" fill="#3aa848"/><path d="M4.3 2.5 L6.1 4.3 L4.3 6.1 L2.5 4.3Z" fill="rgba(255,255,255,0.35)"/></svg><div class="t" style="position:absolute;left:35px;top:100.2px;font-size:8.1px;line-height:9.72px;color:#333;white-space:nowrap;">AUDUSDm</div><div class="t" style="position:absolute;right:836.5px;top:100.1px;font-size:8.55px;line-height:10.26px;color:#4450a8;white-space:nowrap;text-align:right;">0.66864</div><div class="t" style="position:absolute;right:795px;top:100.1px;font-size:8.55px;line-height:10.26px;color:#4450a8;white-space:nowrap;text-align:right;">0.66879</div><div class="t" style="position:absolute;right:774px;top:100.1px;font-size:8.55px;line-height:10.26px;color:#4450a8;white-space:nowrap;text-align:right;">15</div><div style="position:absolute;left:19px;top:110.85px;width:170px;height:14.55px;background:#eef7ec;"></div><div style="position:absolute;left:19px;top:124.89999999999999px;width:170px;height:0.6px;background:#dde6dc;"></div><svg style="left:23.2px;top:114.4px" width="8.6" height="8.6"><path d="M4.3 0 L8.6 4.3 L4.3 8.6 L0 4.3 Z" fill="#3aa848"/><path d="M4.3 2.5 L6.1 4.3 L4.3 6.1 L2.5 4.3Z" fill="rgba(255,255,255,0.35)"/></svg><div class="t" style="position:absolute;left:35px;top:114.75px;font-size:8.1px;line-height:9.72px;color:#333;white-space:nowrap;">AUDJPYm</div><div class="t" style="position:absolute;right:836.5px;top:114.64999999999999px;font-size:8.55px;line-height:10.26px;color:#4450a8;white-space:nowrap;text-align:right;">90.790</div><div class="t" style="position:absolute;right:795px;top:114.64999999999999px;font-size:8.55px;line-height:10.26px;color:#4450a8;white-space:nowrap;text-align:right;">90.811</div><div class="t" style="position:absolute;right:774px;top:114.64999999999999px;font-size:8.55px;line-height:10.26px;color:#4450a8;white-space:nowrap;text-align:right;">21</div><div style="position:absolute;left:20.8px;top:125.7px;width:168.2px;height:14.25px;background:#0f68c8;"></div><div style="position:absolute;left:19px;top:139.45000000000002px;width:170px;height:0.6px;background:#dde6dc;"></div><svg style="left:24.5px;top:130.0px" width="6" height="6"><path d="M3 0 L6 3 L3 6 L0 3 Z" fill="#e07048"/></svg><div class="t" style="position:absolute;left:35px;top:129.3px;font-size:8.1px;line-height:9.72px;color:#e4f0ff;white-space:nowrap;">EURGBPm</div><div class="t" style="position:absolute;right:836.5px;top:129.20000000000002px;font-size:8.55px;line-height:10.26px;color:#eef6ff;white-space:nowrap;text-align:right;">0.86995</div><div class="t" style="position:absolute;right:795px;top:129.20000000000002px;font-size:8.55px;line-height:10.26px;color:#eef6ff;white-space:nowrap;text-align:right;">0.87011</div><div class="t" style="position:absolute;right:774px;top:129.20000000000002px;font-size:8.55px;line-height:10.26px;color:#eef6ff;white-space:nowrap;text-align:right;">16</div><div style="position:absolute;left:19px;top:139.95px;width:170px;height:14.55px;background:#eef7ec;"></div><div style="position:absolute;left:19px;top:154.0px;width:170px;height:0.6px;background:#dde6dc;"></div><svg style="left:23.2px;top:143.5px" width="8.6" height="8.6"><path d="M4.3 0 L8.6 4.3 L4.3 8.6 L0 4.3 Z" fill="#3aa848"/><path d="M4.3 2.5 L6.1 4.3 L4.3 6.1 L2.5 4.3Z" fill="rgba(255,255,255,0.35)"/></svg><div class="t" style="position:absolute;left:35px;top:143.85px;font-size:8.1px;line-height:9.72px;color:#333;white-space:nowrap;">EURCHFm</div><div class="t" style="position:absolute;right:836.5px;top:143.75px;font-size:8.55px;line-height:10.26px;color:#4450a8;white-space:nowrap;text-align:right;">0.97221</div><div class="t" style="position:absolute;right:795px;top:143.75px;font-size:8.55px;line-height:10.26px;color:#4450a8;white-space:nowrap;text-align:right;">0.97248</div><div class="t" style="position:absolute;right:774px;top:143.75px;font-size:8.55px;line-height:10.26px;color:#4450a8;white-space:nowrap;text-align:right;">27</div><div style="position:absolute;left:19px;top:154.5px;width:170px;height:14.55px;background:#eef7ec;"></div><div style="position:absolute;left:19px;top:168.55px;width:170px;height:0.6px;background:#dde6dc;"></div><svg style="left:23.2px;top:158.1px" width="8.6" height="8.6"><path d="M4.3 0 L8.6 4.3 L4.3 8.6 L0 4.3 Z" fill="#3aa848"/><path d="M4.3 2.5 L6.1 4.3 L4.3 6.1 L2.5 4.3Z" fill="rgba(255,255,255,0.35)"/></svg><div class="t" style="position:absolute;left:35px;top:158.4px;font-size:8.1px;line-height:9.72px;color:#333;white-space:nowrap;">GBPUSDm</div><div class="t" style="position:absolute;right:836.5px;top:158.3px;font-size:8.55px;line-height:10.26px;color:#4450a8;white-space:nowrap;text-align:right;">1.25155</div><div class="t" style="position:absolute;right:795px;top:158.3px;font-size:8.55px;line-height:10.26px;color:#4450a8;white-space:nowrap;text-align:right;">1.25163</div><div class="t" style="position:absolute;right:774px;top:158.3px;font-size:8.55px;line-height:10.26px;color:#4450a8;white-space:nowrap;text-align:right;">8</div><div style="position:absolute;left:19px;top:169.05px;width:170px;height:14.55px;background:#eef7ec;"></div><div style="position:absolute;left:19px;top:183.10000000000002px;width:170px;height:0.6px;background:#dde6dc;"></div><svg style="left:23.2px;top:172.7px" width="8.6" height="8.6"><path d="M4.3 0 L8.6 4.3 L4.3 8.6 L0 4.3 Z" fill="#d06038"/><path d="M4.3 2.5 L6.1 4.3 L4.3 6.1 L2.5 4.3Z" fill="rgba(255,255,255,0.35)"/></svg><div class="t" style="position:absolute;left:35px;top:172.95000000000002px;font-size:8.1px;line-height:9.72px;color:#333;white-space:nowrap;">EURUSDm</div><div class="t" style="position:absolute;right:836.5px;top:172.85000000000002px;font-size:8.55px;line-height:10.26px;color:#c05446;white-space:nowrap;text-align:right;">1.08890</div><div class="t" style="position:absolute;right:795px;top:172.85000000000002px;font-size:8.55px;line-height:10.26px;color:#c05446;white-space:nowrap;text-align:right;">1.08900</div><div class="t" style="position:absolute;right:774px;top:172.85000000000002px;font-size:8.55px;line-height:10.26px;color:#c05446;white-space:nowrap;text-align:right;">10</div><div style="position:absolute;left:19px;top:183.60000000000002px;width:170px;height:14.55px;background:#eef7ec;"></div><div style="position:absolute;left:19px;top:197.65000000000003px;width:170px;height:0.6px;background:#dde6dc;"></div><svg style="left:23.2px;top:187.2px" width="8.6" height="8.6"><path d="M4.3 0 L8.6 4.3 L4.3 8.6 L0 4.3 Z" fill="#d06038"/><path d="M4.3 2.5 L6.1 4.3 L4.3 6.1 L2.5 4.3Z" fill="rgba(255,255,255,0.35)"/></svg><div class="t" style="position:absolute;left:35px;top:187.50000000000003px;font-size:8.1px;line-height:9.72px;color:#333;white-space:nowrap;">EURAUDm</div><div class="t" style="position:absolute;right:836.5px;top:187.40000000000003px;font-size:8.55px;line-height:10.26px;color:#c05446;white-space:nowrap;text-align:right;">1.62828</div><div class="t" style="position:absolute;right:795px;top:187.40000000000003px;font-size:8.55px;line-height:10.26px;color:#c05446;white-space:nowrap;text-align:right;">1.62851</div><div class="t" style="position:absolute;right:774px;top:187.40000000000003px;font-size:8.55px;line-height:10.26px;color:#c05446;white-space:nowrap;text-align:right;">23</div><div style="position:absolute;left:19px;top:198.15px;width:170px;height:14.55px;background:#eef7ec;"></div><div style="position:absolute;left:19px;top:212.20000000000002px;width:170px;height:0.6px;background:#dde6dc;"></div><svg style="left:23.2px;top:201.8px" width="8.6" height="8.6"><path d="M4.3 0 L8.6 4.3 L4.3 8.6 L0 4.3 Z" fill="#d06038"/><path d="M4.3 2.5 L6.1 4.3 L4.3 6.1 L2.5 4.3Z" fill="rgba(255,255,255,0.35)"/></svg><div class="t" style="position:absolute;left:35px;top:202.05px;font-size:8.1px;line-height:9.72px;color:#333;white-space:nowrap;">GBPAUDm</div><div class="t" style="position:absolute;right:836.5px;top:201.95000000000002px;font-size:8.55px;line-height:10.26px;color:#c05446;white-space:nowrap;text-align:right;">1.87149</div><div class="t" style="position:absolute;right:795px;top:201.95000000000002px;font-size:8.55px;line-height:10.26px;color:#c05446;white-space:nowrap;text-align:right;">1.87177</div><div class="t" style="position:absolute;right:774px;top:201.95000000000002px;font-size:8.55px;line-height:10.26px;color:#c05446;white-space:nowrap;text-align:right;">28</div><div style="position:absolute;left:19px;top:212.7px;width:170px;height:14.55px;background:#eef7ec;"></div><div style="position:absolute;left:19px;top:226.75px;width:170px;height:0.6px;background:#dde6dc;"></div><svg style="left:23.2px;top:216.3px" width="8.6" height="8.6"><path d="M4.3 0 L8.6 4.3 L4.3 8.6 L0 4.3 Z" fill="#3aa848"/><path d="M4.3 2.5 L6.1 4.3 L4.3 6.1 L2.5 4.3Z" fill="rgba(255,255,255,0.35)"/></svg><div class="t" style="position:absolute;left:35px;top:216.6px;font-size:8.1px;line-height:9.72px;color:#333;white-space:nowrap;">GBPJPYm</div><div class="t" style="position:absolute;right:836.5px;top:216.5px;font-size:8.55px;line-height:10.26px;color:#4450a8;white-space:nowrap;text-align:right;">169.937</div><div class="t" style="position:absolute;right:795px;top:216.5px;font-size:8.55px;line-height:10.26px;color:#4450a8;white-space:nowrap;text-align:right;">169.957</div><div class="t" style="position:absolute;right:774px;top:216.5px;font-size:8.55px;line-height:10.26px;color:#4450a8;white-space:nowrap;text-align:right;">20</div><div style="position:absolute;left:19px;top:227.25px;width:170px;height:14.55px;background:#eef7ec;"></div><div style="position:absolute;left:19px;top:241.3px;width:170px;height:0.6px;background:#dde6dc;"></div><svg style="left:23.2px;top:230.8px" width="8.6" height="8.6"><path d="M4.3 0 L8.6 4.3 L4.3 8.6 L0 4.3 Z" fill="#d06038"/><path d="M4.3 2.5 L6.1 4.3 L4.3 6.1 L2.5 4.3Z" fill="rgba(255,255,255,0.35)"/></svg><div class="t" style="position:absolute;left:35px;top:231.15px;font-size:8.1px;line-height:9.72px;color:#333;white-space:nowrap;">BTCUSDm</div><div class="t" style="position:absolute;right:836.5px;top:231.05px;font-size:8.55px;line-height:10.26px;color:#c05446;white-space:nowrap;text-align:right;">27235.81</div><div class="t" style="position:absolute;right:795px;top:231.05px;font-size:8.55px;line-height:10.26px;color:#c05446;white-space:nowrap;text-align:right;">27259.92</div><div class="t" style="position:absolute;right:774px;top:231.05px;font-size:8.55px;line-height:10.26px;color:#c05446;white-space:nowrap;text-align:right;">2...</div><div style="position:absolute;left:83.7px;top:80.5px;width:0.7px;height:160px;background:#dcdcdc;opacity:0.8;"></div><div style="position:absolute;left:125.3px;top:80.5px;width:0.7px;height:160px;background:#dcdcdc;opacity:0.8;"></div><div style="position:absolute;left:167.1px;top:80.5px;width:0.7px;height:160px;background:#dcdcdc;opacity:0.8;"></div><div style="position:absolute;left:188.5px;top:80.5px;width:0.7px;height:160px;background:#dcdcdc;"></div><div style="position:absolute;left:189px;top:80.5px;width:11px;height:160px;background:#f0f0f0;"></div><div style="position:absolute;left:193px;top:94px;width:5px;height:92px;background:#8a8a8a;"></div><div style="position:absolute;left:19px;top:240.5px;width:182px;height:16.5px;background:#f0f0f0;"></div><div style="position:absolute;left:21px;top:240px;width:49.5px;height:15px;background:#fff;border:1px solid #8a8a8a;border-top:none;"></div><div class="t" style="position:absolute;left:29px;top:242.8px;font-size:8.6px;line-height:10.32px;color:#333;white-space:nowrap;">Symbols</div><div style="position:absolute;left:70.5px;top:241px;width:52px;height:13px;background:#f0f0f0;border-right:1px solid #c8c8c8;"></div><div class="t" style="position:absolute;left:78px;top:242.8px;font-size:8.0px;line-height:9.60px;color:#a0a0a0;white-space:nowrap;">Tick Chart</div><div style="position:absolute;left:70.5px;top:240.2px;width:130px;height:0.8px;background:#a8a8a8;"></div><div style="position:absolute;left:19px;top:260.5px;width:171.6px;height:10.5px;background:linear-gradient(90deg,#a8c0d8,#adc8e4);"></div><div class="t" style="position:absolute;left:22.5px;top:260.6px;font-size:7.9px;line-height:9.48px;color:#1a2a4a;white-space:nowrap;">Navigator</div><div class="t" style="position:absolute;left:194px;top:261.5px;font-size:8px;line-height:9.60px;color:#1a1a1a;white-space:nowrap;font-weight:bold;">&#215;</div><div style="position:absolute;left:19px;top:271px;width:170px;height:160px;background:#fff;"></div><div style="position:absolute;left:189px;top:271px;width:12px;height:160px;background:#f4f4f4;"></div><div style="position:absolute;left:193px;top:352px;width:5px;height:25px;background:#8a8a8a;"></div><div style="position:absolute;left:29px;top:271px;width:0.8px;height:160px;background:#e4e4e4;"></div><div style="position:absolute;left:44.2px;top:271px;width:0.8px;height:160px;background:#d8d8d8;"></div><div style="position:absolute;left:44.5px;top:279.3px;width:8px;height:0.8px;background:#d8d8d8;"></div><svg style="left:52.5px;top:274.1px" width="11" height="11"><rect x="0.5" y="0.5" width="9.5" height="9.5" rx="1.5" fill="#f0d868" stroke="#c8a830" stroke-width="0.8"/><path d="M4 2.5 Q6 2 5.5 3.5 L4.5 7.5 Q4 8.5 3 8" fill="none" stroke="#6a5a20" stroke-width="0.9"/><path d="M3.3 5 L6.3 5" stroke="#6a5a20" stroke-width="0.7"/><circle cx="8.6" cy="8.6" r="1.9" fill="#e0b840" stroke="#9a7a20" stroke-width="0.6"/></svg><div class="t" style="position:absolute;left:67.5px;top:274.40000000000003px;font-size:8.7px;line-height:10.44px;color:#333;white-space:nowrap;">Bulls</div><div style="position:absolute;left:44.5px;top:292.85px;width:8px;height:0.8px;background:#d8d8d8;"></div><svg style="left:52.5px;top:287.7px" width="11" height="11"><rect x="0.5" y="0.5" width="9.5" height="9.5" rx="1.5" fill="#f0d868" stroke="#c8a830" stroke-width="0.8"/><path d="M4 2.5 Q6 2 5.5 3.5 L4.5 7.5 Q4 8.5 3 8" fill="none" stroke="#6a5a20" stroke-width="0.9"/><path d="M3.3 5 L6.3 5" stroke="#6a5a20" stroke-width="0.7"/><circle cx="8.6" cy="8.6" r="1.9" fill="#e0b840" stroke="#9a7a20" stroke-width="0.6"/></svg><div class="t" style="position:absolute;left:67.5px;top:287.95000000000005px;font-size:8.7px;line-height:10.44px;color:#333;white-space:nowrap;">CCI</div><div style="position:absolute;left:44.5px;top:306.40000000000003px;width:8px;height:0.8px;background:#d8d8d8;"></div><svg style="left:52.5px;top:301.2px" width="11" height="11"><rect x="0.5" y="0.5" width="9.5" height="9.5" rx="1.5" fill="#f0d868" stroke="#c8a830" stroke-width="0.8"/><path d="M4 2.5 Q6 2 5.5 3.5 L4.5 7.5 Q4 8.5 3 8" fill="none" stroke="#6a5a20" stroke-width="0.9"/><path d="M3.3 5 L6.3 5" stroke="#6a5a20" stroke-width="0.7"/><circle cx="8.6" cy="8.6" r="1.9" fill="#e0b840" stroke="#9a7a20" stroke-width="0.6"/></svg><div class="t" style="position:absolute;left:67.5px;top:301.50000000000006px;font-size:8.7px;line-height:10.44px;color:#333;white-space:nowrap;">Custom Moving Averages</div><div style="position:absolute;left:44.5px;top:319.95px;width:8px;height:0.8px;background:#d8d8d8;"></div><svg style="left:52.5px;top:314.8px" width="11" height="11"><rect x="0.5" y="0.5" width="9.5" height="9.5" rx="1.5" fill="#f0d868" stroke="#c8a830" stroke-width="0.8"/><path d="M4 2.5 Q6 2 5.5 3.5 L4.5 7.5 Q4 8.5 3 8" fill="none" stroke="#6a5a20" stroke-width="0.9"/><path d="M3.3 5 L6.3 5" stroke="#6a5a20" stroke-width="0.7"/><circle cx="8.6" cy="8.6" r="1.9" fill="#e0b840" stroke="#9a7a20" stroke-width="0.6"/></svg><div class="t" style="position:absolute;left:67.5px;top:315.05px;font-size:8.7px;line-height:10.44px;color:#333;white-space:nowrap;">Heiken Ashi</div><div style="position:absolute;left:44.5px;top:333.5px;width:8px;height:0.8px;background:#d8d8d8;"></div><svg style="left:52.5px;top:328.3px" width="11" height="11"><rect x="0.5" y="0.5" width="9.5" height="9.5" rx="1.5" fill="#f0d868" stroke="#c8a830" stroke-width="0.8"/><path d="M4 2.5 Q6 2 5.5 3.5 L4.5 7.5 Q4 8.5 3 8" fill="none" stroke="#6a5a20" stroke-width="0.9"/><path d="M3.3 5 L6.3 5" stroke="#6a5a20" stroke-width="0.7"/><circle cx="8.6" cy="8.6" r="1.9" fill="#e0b840" stroke="#9a7a20" stroke-width="0.6"/></svg><div class="t" style="position:absolute;left:67.5px;top:328.6px;font-size:8.7px;line-height:10.44px;color:#333;white-space:nowrap;">Ichimoku</div><div style="position:absolute;left:44.5px;top:347.05px;width:8px;height:0.8px;background:#d8d8d8;"></div><svg style="left:52.5px;top:341.9px" width="11" height="11"><rect x="0.5" y="0.5" width="9.5" height="9.5" rx="1.5" fill="#f0d868" stroke="#c8a830" stroke-width="0.8"/><path d="M4 2.5 Q6 2 5.5 3.5 L4.5 7.5 Q4 8.5 3 8" fill="none" stroke="#6a5a20" stroke-width="0.9"/><path d="M3.3 5 L6.3 5" stroke="#6a5a20" stroke-width="0.7"/><circle cx="8.6" cy="8.6" r="1.9" fill="#e0b840" stroke="#9a7a20" stroke-width="0.6"/></svg><div class="t" style="position:absolute;left:67.5px;top:342.15000000000003px;font-size:8.7px;line-height:10.44px;color:#333;white-space:nowrap;">iExposure</div><div style="position:absolute;left:44.5px;top:360.6px;width:8px;height:0.8px;background:#d8d8d8;"></div><svg style="left:52.5px;top:355.4px" width="11" height="11"><rect x="0.5" y="0.5" width="9.5" height="9.5" rx="1.5" fill="#f0d868" stroke="#c8a830" stroke-width="0.8"/><path d="M4 2.5 Q6 2 5.5 3.5 L4.5 7.5 Q4 8.5 3 8" fill="none" stroke="#6a5a20" stroke-width="0.9"/><path d="M3.3 5 L6.3 5" stroke="#6a5a20" stroke-width="0.7"/><circle cx="8.6" cy="8.6" r="1.9" fill="#e0b840" stroke="#9a7a20" stroke-width="0.6"/></svg><div class="t" style="position:absolute;left:67.5px;top:355.70000000000005px;font-size:8.7px;line-height:10.44px;color:#333;white-space:nowrap;">MACD</div><div style="position:absolute;left:44.5px;top:374.15000000000003px;width:8px;height:0.8px;background:#d8d8d8;"></div><svg style="left:52.5px;top:369.0px" width="11" height="11"><rect x="0.5" y="0.5" width="9.5" height="9.5" rx="1.5" fill="#f0d868" stroke="#c8a830" stroke-width="0.8"/><path d="M4 2.5 Q6 2 5.5 3.5 L4.5 7.5 Q4 8.5 3 8" fill="none" stroke="#6a5a20" stroke-width="0.9"/><path d="M3.3 5 L6.3 5" stroke="#6a5a20" stroke-width="0.7"/><circle cx="8.6" cy="8.6" r="1.9" fill="#e0b840" stroke="#9a7a20" stroke-width="0.6"/></svg><div class="t" style="position:absolute;left:67.5px;top:369.25000000000006px;font-size:8.7px;line-height:10.44px;color:#333;white-space:nowrap;">MaxOrdersWarning</div><div style="position:absolute;left:44.5px;top:387.7px;width:8px;height:0.8px;background:#d8d8d8;"></div><svg style="left:52.5px;top:382.5px" width="11" height="11"><rect x="0.5" y="0.5" width="9.5" height="9.5" rx="1.5" fill="#f0d868" stroke="#c8a830" stroke-width="0.8"/><path d="M4 2.5 Q6 2 5.5 3.5 L4.5 7.5 Q4 8.5 3 8" fill="none" stroke="#6a5a20" stroke-width="0.9"/><path d="M3.3 5 L6.3 5" stroke="#6a5a20" stroke-width="0.7"/><circle cx="8.6" cy="8.6" r="1.9" fill="#e0b840" stroke="#9a7a20" stroke-width="0.6"/></svg><div class="t" style="position:absolute;left:67.5px;top:382.8px;font-size:8.7px;line-height:10.44px;color:#333;white-space:nowrap;">Momentum</div><div style="position:absolute;left:44.5px;top:401.25px;width:8px;height:0.8px;background:#d8d8d8;"></div><svg style="left:52.5px;top:396.1px" width="11" height="11"><rect x="0.5" y="0.5" width="9.5" height="9.5" rx="1.5" fill="#f0d868" stroke="#c8a830" stroke-width="0.8"/><path d="M4 2.5 Q6 2 5.5 3.5 L4.5 7.5 Q4 8.5 3 8" fill="none" stroke="#6a5a20" stroke-width="0.9"/><path d="M3.3 5 L6.3 5" stroke="#6a5a20" stroke-width="0.7"/><circle cx="8.6" cy="8.6" r="1.9" fill="#e0b840" stroke="#9a7a20" stroke-width="0.6"/></svg><div class="t" style="position:absolute;left:67.5px;top:396.35px;font-size:8.7px;line-height:10.44px;color:#333;white-space:nowrap;">OsMA</div><div style="position:absolute;left:44.5px;top:414.8px;width:8px;height:0.8px;background:#d8d8d8;"></div><svg style="left:52.5px;top:409.6px" width="11" height="11"><rect x="0.5" y="0.5" width="9.5" height="9.5" rx="1.5" fill="#f0d868" stroke="#c8a830" stroke-width="0.8"/><path d="M4 2.5 Q6 2 5.5 3.5 L4.5 7.5 Q4 8.5 3 8" fill="none" stroke="#6a5a20" stroke-width="0.9"/><path d="M3.3 5 L6.3 5" stroke="#6a5a20" stroke-width="0.7"/><circle cx="8.6" cy="8.6" r="1.9" fill="#e0b840" stroke="#9a7a20" stroke-width="0.6"/></svg><div class="t" style="position:absolute;left:67.5px;top:409.90000000000003px;font-size:8.7px;line-height:10.44px;color:#333;white-space:nowrap;">Parabolic</div><div style="position:absolute;left:44.5px;top:428.35px;width:8px;height:0.8px;background:#d8d8d8;"></div><svg style="left:52.5px;top:423.2px" width="11" height="11"><rect x="0.5" y="0.5" width="9.5" height="9.5" rx="1.5" fill="#f0d868" stroke="#c8a830" stroke-width="0.8"/><path d="M4 2.5 Q6 2 5.5 3.5 L4.5 7.5 Q4 8.5 3 8" fill="none" stroke="#6a5a20" stroke-width="0.9"/><path d="M3.3 5 L6.3 5" stroke="#6a5a20" stroke-width="0.7"/><circle cx="8.6" cy="8.6" r="1.9" fill="#e0b840" stroke="#9a7a20" stroke-width="0.6"/></svg><div class="t" style="position:absolute;left:67.5px;top:423.45000000000005px;font-size:8.7px;line-height:10.44px;color:#333;white-space:nowrap;">RSI</div><div style="position:absolute;left:19px;top:429.5px;width:182px;height:17.5px;background:#f0f0f0;"></div><div style="position:absolute;left:21px;top:430.5px;width:52px;height:14.5px;background:#fff;border:1px solid #8a8a8a;border-top:none;"></div><div class="t" style="position:absolute;left:28.5px;top:433.5px;font-size:8.6px;line-height:10.32px;color:#333;white-space:nowrap;">Common</div><div style="position:absolute;left:73px;top:431.5px;width:49px;height:12.5px;background:#f0f0f0;border-right:1px solid #c8c8c8;"></div><div class="t" style="position:absolute;left:80px;top:433.5px;font-size:8.0px;line-height:9.60px;color:#a0a0a0;white-space:nowrap;">Favorites</div><div style="position:absolute;left:73px;top:430.5px;width:128px;height:0.8px;background:#a8a8a8;"></div><div style="position:absolute;left:17px;top:448.2px;width:929px;height:23.3px;background:#ebebeb;"></div><div style="position:absolute;left:29.5px;top:452.4px;width:916.5px;height:18px;background:#fafafa;border-top:1px solid #e2e2e2;"></div><div class="t" style="position:absolute;left:20.5px;top:450.5px;font-size:9px;line-height:10.80px;color:#111;white-space:nowrap;font-weight:bold;">&#215;</div><div style="position:absolute;left:20px;top:463px;width:8px;height:2px;background:#7a9ac0;"></div><svg style="left:32.6px;top:458px" width="7" height="7"><circle cx="3.3" cy="3.3" r="2.6" fill="#c4c4c4" stroke="#9a9a9a" stroke-width="0.8"/></svg><div class="t" style="position:absolute;left:42.5px;top:456.2px;font-size:8.45px;line-height:10.14px;color:#333;white-space:nowrap;">Balance: 504.83 USD&nbsp; Profit/Loss: 0.00&nbsp; Equity: 504.83&nbsp; Free margin: 504.83</div><div style="position:absolute;left:17px;top:471.5px;width:929px;height:15.5px;background:#e8e8e8;border-top:1px solid #d6d6d6;"></div><div class="t" style="position:absolute;left:18.6px;top:477.0px;font-size:8.3px;line-height:9.96px;color:#333;white-space:nowrap;">For Help, press F1</div><div style="position:absolute;left:431.25px;top:472.5px;width:1px;height:14px;background:#d0d0d0;"></div><div style="position:absolute;left:520px;top:472.5px;width:1px;height:14px;background:#d0d0d0;"></div><div style="position:absolute;left:597.7px;top:472.5px;width:1px;height:14px;background:#d0d0d0;"></div><div style="position:absolute;left:650.6px;top:472.5px;width:1px;height:14px;background:#d0d0d0;"></div><div style="position:absolute;left:704px;top:472.5px;width:1px;height:14px;background:#d0d0d0;"></div><div style="position:absolute;left:754.6px;top:472.5px;width:1px;height:14px;background:#d0d0d0;"></div><div style="position:absolute;left:807px;top:472.5px;width:1px;height:14px;background:#d0d0d0;"></div><div style="position:absolute;left:857.5px;top:472.5px;width:1px;height:14px;background:#d0d0d0;"></div><div class="t" style="position:absolute;left:436.9px;top:477.0px;font-size:8.3px;line-height:9.96px;color:#333;white-space:nowrap;">Default</div><svg style="left:859.4px;top:475px" width="20" height="10"><rect x="0.0" y="0" width="1.1" height="9.5" fill="#2a5a8a"/><rect x="0.0" y="0" width="1.1" height="8.0" fill="#8aaa30"/><rect x="1.6" y="0" width="1.1" height="9.5" fill="#2a5a8a"/><rect x="1.6" y="0" width="1.1" height="7.2" fill="#8aaa30"/><rect x="3.2" y="0" width="1.1" height="9.5" fill="#2a5a8a"/><rect x="3.2" y="0" width="1.1" height="6.4" fill="#8aaa30"/><rect x="4.8" y="0" width="1.1" height="9.5" fill="#2a5a8a"/><rect x="4.8" y="0" width="1.1" height="5.6" fill="#8aaa30"/><rect x="6.4" y="0" width="1.1" height="9.5" fill="#2a5a8a"/><rect x="6.4" y="0" width="1.1" height="4.8" fill="#8aaa30"/><rect x="8.0" y="0" width="1.1" height="9.5" fill="#2a5a8a"/><rect x="8.0" y="0" width="1.1" height="4.0" fill="#8aaa30"/><rect x="9.6" y="0" width="1.1" height="9.5" fill="#2a5a8a"/><rect x="9.6" y="0" width="1.1" height="3.2" fill="#8aaa30"/><rect x="11.2" y="0" width="1.1" height="9.5" fill="#2a5a8a"/><rect x="11.2" y="0" width="1.1" height="2.5" fill="#8aaa30"/><rect x="12.8" y="0" width="1.1" height="9.5" fill="#2a5a8a"/><rect x="12.8" y="0" width="1.1" height="1.7" fill="#8aaa30"/><rect x="14.4" y="0" width="1.1" height="9.5" fill="#2a5a8a"/><rect x="14.4" y="0" width="1.1" height="0.9" fill="#8aaa30"/><rect x="16.0" y="0" width="1.1" height="9.5" fill="#2a5a8a"/><rect x="16.0" y="0" width="1.1" height="0.5" fill="#8aaa30"/><rect x="17.6" y="0" width="1.1" height="9.5" fill="#2a5a8a"/><rect x="17.6" y="0" width="1.1" height="0.5" fill="#8aaa30"/></svg><div class="t" style="position:absolute;left:882.3px;top:476.2px;font-size:9.0px;line-height:10.80px;color:#333;white-space:nowrap;">1047/11 kb</div><div style="position:absolute;left:241.3px;top:106px;width:438.5px;height:220px;border-radius:7px;overflow:hidden;background:#ebebeb;box-shadow:0 0 0 0.5px #9a9a9a;"><div style="position:absolute;left:0;top:0;width:100%;height:22px;background:linear-gradient(90deg,#f3ecdd,#f6efe4 60%,#f5eee8);"></div><div style="position:absolute;left:0;top:22px;width:100%;height:18px;background:#ebebeb;"></div><div style="position:absolute;left:4px;top:40px;width:430.5px;height:153px;background:#f3f3f3;"></div></div><div class="t" style="position:absolute;left:247.2px;top:111.5px;font-size:8.72px;line-height:10.46px;color:#3a3a3a;white-space:nowrap;">Custom Indicator - MaxOrdersWarning</div><div class="t" style="position:absolute;left:625px;top:110.5px;font-size:9.5px;line-height:11.40px;color:#444;white-space:nowrap;">?</div><svg style="left:658.5px;top:112.5px" width="9" height="9"><path d="M0.5 0.5 L8.5 8.5 M8.5 0.5 L0.5 8.5" stroke="#444" stroke-width="1.1"/></svg><div style="position:absolute;left:310.5px;top:131px;width:27px;height:15px;background:#efefef;"></div><div class="t" style="position:absolute;left:249.6px;top:134.5px;font-size:7.8px;line-height:9.36px;color:#333;white-space:nowrap;">About</div><div class="t" style="position:absolute;left:276.4px;top:134.5px;font-size:7.8px;line-height:9.36px;color:#333;white-space:nowrap;">Common</div><div class="t" style="position:absolute;left:313.1px;top:133.7px;font-size:7.8px;line-height:9.36px;color:#333;white-space:nowrap;">Inputs</div><div class="t" style="position:absolute;left:340.8px;top:134.5px;font-size:7.8px;line-height:9.36px;color:#333;white-space:nowrap;">Colors</div><div class="t" style="position:absolute;left:368.5px;top:134.5px;font-size:7.8px;line-height:9.36px;color:#333;white-space:nowrap;">Visualization</div><div style="position:absolute;left:251.5px;top:150px;width:336.5px;height:146.5px;background:#fafafa;border:1px solid #c8c8c8;"></div><div style="position:absolute;left:252.5px;top:151px;width:334.5px;height:12.5px;background:#fcfcfc;"></div><div class="t" style="position:absolute;left:255.7px;top:152.8px;font-size:7.7px;line-height:9.24px;color:#333;white-space:nowrap;">Variable</div><div class="t" style="position:absolute;left:422px;top:152.8px;font-size:7.7px;line-height:9.24px;color:#333;white-space:nowrap;">Value</div><div style="position:absolute;left:419.2px;top:151px;width:0.8px;height:12.5px;background:#e0e0e0;"></div><div style="position:absolute;left:252.5px;top:163.5px;width:167px;height:14px;background:#d9e8f7;"></div><svg style="left:253.5px;top:164.5px" width="12" height="12"><rect x="0.5" y="0.5" width="11" height="11" rx="2" fill="#6f9ed4" stroke="#3f6fae" stroke-width="0.8"/><text x="6" y="8.2" font-size="5.5" font-weight="bold" text-anchor="middle" fill="#10284a" font-family="Liberation Sans">123</text></svg><div class="t" style="position:absolute;left:268.1px;top:166.2px;font-size:7.6px;line-height:9.12px;color:#333;white-space:nowrap;">MaxOrders</div><div style="position:absolute;left:419.3px;top:163.3px;width:169px;height:14.4px;background:#fff;border:1px solid #b4b4b4;"></div><div class="t" style="position:absolute;left:421.8px;top:166.2px;font-size:7.7px;line-height:9.24px;color:#222;white-space:nowrap;">3</div><svg style="left:482px;top:165px" width="5" height="10"><path d="M0.5 0.5 L4.5 0.5 M2.5 0.5 L2.5 9.5 M0.5 9.5 L4.5 9.5" stroke="#555" stroke-width="0.9"/></svg><div style="position:absolute;left:594.2px;top:254.4px;width:75.4px;height:15.6px;background:#fbfbfb;border:1px solid #e2e2e2;border-radius:3px;"></div><div class="t" style="position:absolute;left:531.9000000000001px;width:200px;top:258.2px;font-size:7.8px;line-height:9.36px;color:#333;white-space:nowrap;text-align:center;">Load</div><div style="position:absolute;left:594.2px;top:278.8px;width:75.4px;height:15.4px;background:#fbfbfb;border:1px solid #e2e2e2;border-radius:3px;"></div><div class="t" style="position:absolute;left:531.9000000000001px;width:200px;top:282.6px;font-size:7.8px;line-height:9.36px;color:#333;white-space:nowrap;text-align:center;">Save</div><div style="position:absolute;left:501.5px;top:304.4px;width:53.5px;height:15.8px;background:#f6fafe;border:1px solid #6fa8dc;border-radius:3px;"></div><div class="t" style="position:absolute;left:428.25px;width:200px;top:308.2px;font-size:7.8px;line-height:9.36px;color:#333;white-space:nowrap;text-align:center;">OK</div><div style="position:absolute;left:560.8px;top:304.4px;width:53.2px;height:15.8px;background:#fbfbfb;border:1px solid #e2e2e2;border-radius:3px;"></div><div class="t" style="position:absolute;left:487.4px;width:200px;top:308.2px;font-size:7.8px;line-height:9.36px;color:#333;white-space:nowrap;text-align:center;">Cancel</div><div style="position:absolute;left:619.6px;top:304.4px;width:52.7px;height:15.8px;background:#fbfbfb;border:1px solid #e2e2e2;border-radius:3px;"></div><div class="t" style="position:absolute;left:545.95px;width:200px;top:308.2px;font-size:7.8px;line-height:9.36px;color:#333;white-space:nowrap;text-align:center;">Reset</div></div></body></html>
